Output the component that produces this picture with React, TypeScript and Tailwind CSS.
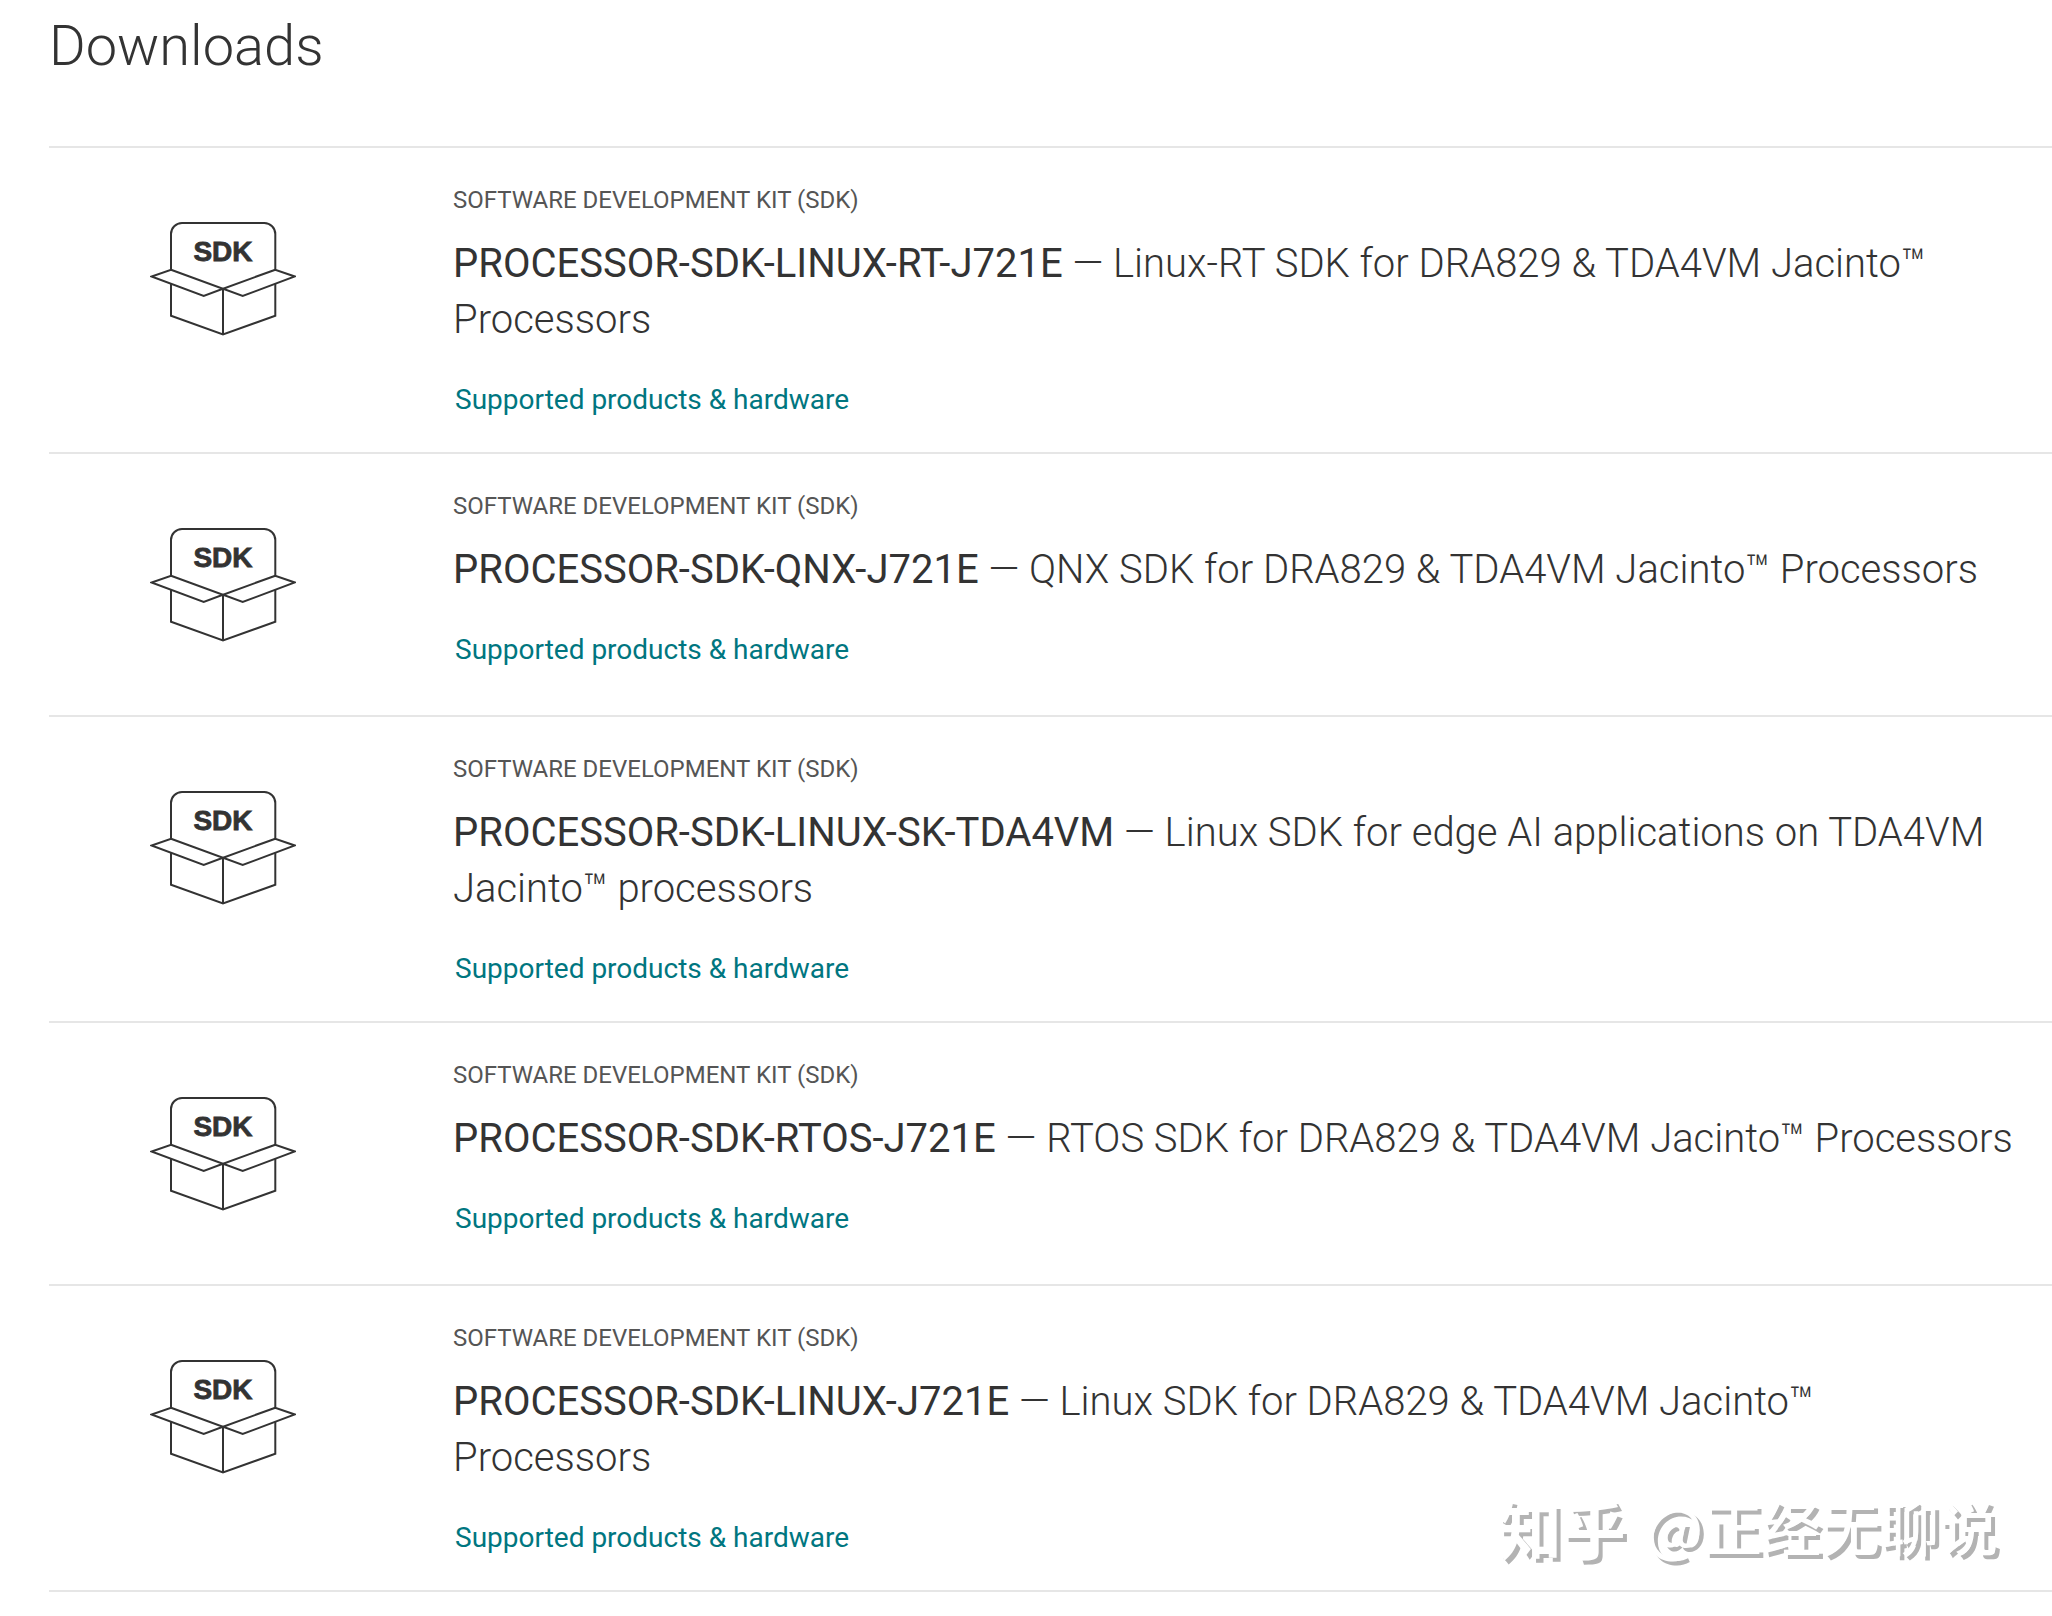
type Download = { name: string; description: string };

const downloads: Download[] = [
  { name: "PROCESSOR-SDK-LINUX-RT-J721E", description: "Linux-RT SDK for DRA829 & TDA4VM Jacinto™ Processors" },
  { name: "PROCESSOR-SDK-QNX-J721E", description: "QNX SDK for DRA829 & TDA4VM Jacinto™ Processors" },
  { name: "PROCESSOR-SDK-LINUX-SK-TDA4VM", description: "Linux SDK for edge AI applications on TDA4VM Jacinto™ processors" },
  { name: "PROCESSOR-SDK-RTOS-J721E", description: "RTOS SDK for DRA829 & TDA4VM Jacinto™ Processors" },
  { name: "PROCESSOR-SDK-LINUX-J721E", description: "Linux SDK for DRA829 & TDA4VM Jacinto™ Processors" },
];

function SdkIcon() {
  return (
    <svg
      viewBox="0 0 146 116"
      className="h-[116px] w-[146px]"
      fill="none"
      stroke="#333333"
      strokeWidth="2"
      aria-hidden="true"
    >
      <path d="M21 49.500V14A11 11 0 0 1 32 3H114.300A11 11 0 0 1 125.300 14V49.500" />
      <path d="M21 49.700L73 68.700L53.700 76L1.500 56.500Z" />
      <path d="M125.300 49.700L73 68.700L92.700 76L144.800 56.500Z" />
      <path d="M21 63.700V95.700L73 114.400L125.300 95.700V63.700M73 68.700V114.400" />
      <text
        x="73"
        y="41"
        textAnchor="middle"
        fill="#333333"
        strokeWidth="0.8"
        className="font-['Liberation_Sans',sans-serif] text-[28px] font-bold"
      >
        SDK
      </text>
    </svg>
  );
}

function DownloadRow({ name, description }: Download) {
  return (
    <li className="flex min-h-[263px] border-t-2 border-[#e6e6e6]">
      <div className="flex w-[348px] shrink-0 items-start justify-center pt-[72px]">
        <SdkIcon />
      </div>
      <div className="ml-14 mr-9 flex min-w-0 flex-1 flex-col items-start pt-9 pb-8">
        <p className="text-[24px] leading-8 text-[#555555]">SOFTWARE DEVELOPMENT KIT (SDK)</p>
        <h2 className="mt-5 text-[40px] leading-14 font-light">
          <span className="font-normal">{name}</span>
          <span>{` — ${description}`}</span>
        </h2>
        <a href="#" className="mt-8 ml-0.5 text-[28px] leading-10 text-[#007680]">
          Supported products &amp; hardware
        </a>
      </div>
    </li>
  );
}

export default function App() {
  return (
    <main className="relative min-h-screen bg-white pl-[49px] font-['Roboto',sans-serif] text-[#333333]">
      <h1 className="pt-2.5 pb-16 text-[56px] leading-[72px] font-light">Downloads</h1>
      <ul className="border-b-2 border-[#e6e6e6]">
        {downloads.map((item) => (
          <DownloadRow key={item.name} {...item} />
        ))}
      </ul>
      <div className="absolute right-[54px] bottom-[50px] flex items-center gap-5 font-['Noto_Sans_CJK_SC',sans-serif] text-[59px] leading-[80px] font-medium whitespace-nowrap text-white [text-shadow:4px_4px_0_#b3b3b3]">
        <span className="text-[64px] font-bold">知乎</span>
        <span>@正经无聊说</span>
      </div>
    </main>
  );
}
